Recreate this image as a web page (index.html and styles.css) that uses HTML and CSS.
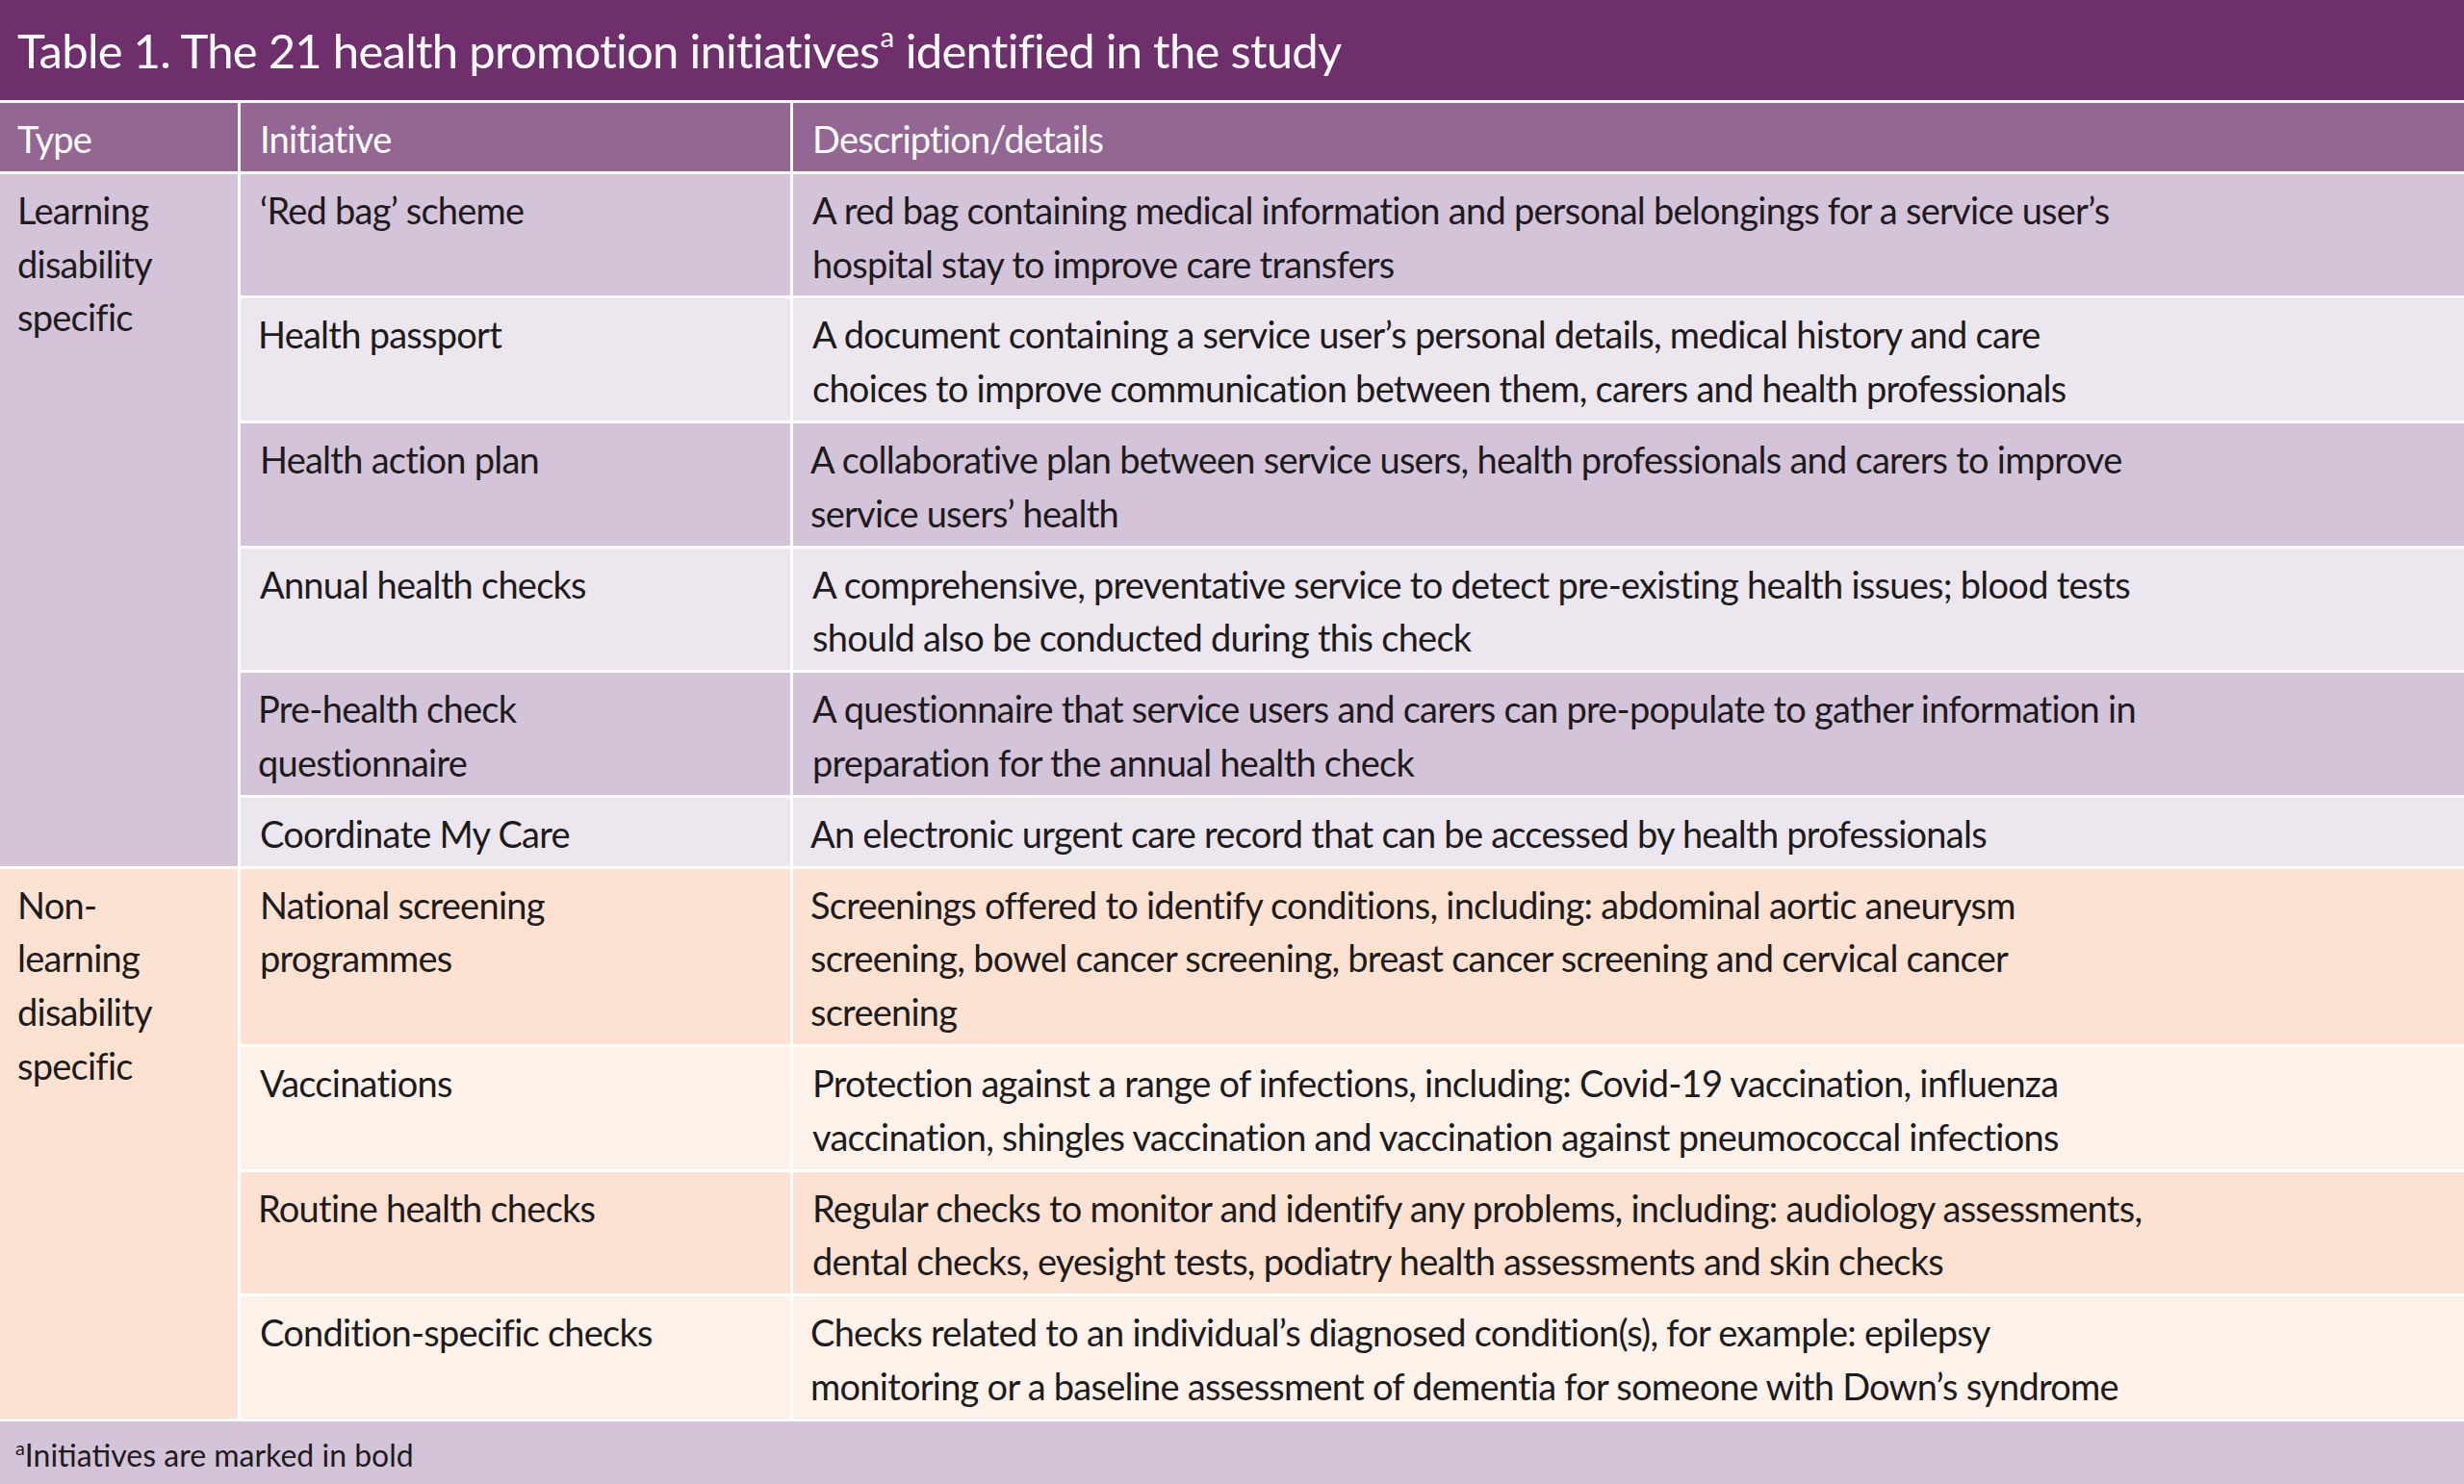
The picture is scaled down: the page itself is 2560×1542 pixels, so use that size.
FILE: index.html
```html
<!DOCTYPE html>
<html lang="en">
<head>
<meta charset="utf-8">
<title>Table 1</title>
<link rel="stylesheet" href="styles.css">
</head>
<body>
<div class="page">
  <h1 class="title">Table 1. The 21 health promotion initiatives<sup class="sup">a</sup> identified in the study</h1>
  <div class="grid">
    <div class="cell head">Type</div>
    <div class="cell head">Initiative</div>
    <div class="cell head">Description/details</div>

    <div class="cell type ld">Learning<br>disability<br>specific</div>

    <div class="cell dark">‘Red bag’ scheme</div>
    <div class="cell dark desc">A red bag containing medical information and personal belongings for a service user’s<br>hospital stay to improve care transfers</div>

    <div class="cell light">Health passport</div>
    <div class="cell light desc">A document containing a service user’s personal details, medical history and care<br>choices to improve communication between them, carers and health professionals</div>

    <div class="cell dark">Health action plan</div>
    <div class="cell dark desc">A collaborative plan between service users, health professionals and carers to improve<br>service users’ health</div>

    <div class="cell light">Annual health checks</div>
    <div class="cell light desc">A comprehensive, preventative service to detect pre-existing health issues; blood tests<br>should also be conducted during this check</div>

    <div class="cell dark">Pre-health check<br>questionnaire</div>
    <div class="cell dark desc">A questionnaire that service users and carers can pre-populate to gather information in<br>preparation for the annual health check</div>

    <div class="cell light">Coordinate My Care</div>
    <div class="cell light desc">An electronic urgent care record that can be accessed by health professionals</div>

    <div class="cell type nld">Non-<br>learning<br>disability<br>specific</div>

    <div class="cell pdark">National screening<br>programmes</div>
    <div class="cell pdark desc">Screenings offered to identify conditions, including: abdominal aortic aneurysm<br>screening, bowel cancer screening, breast cancer screening and cervical cancer<br>screening</div>

    <div class="cell plight">Vaccinations</div>
    <div class="cell plight desc">Protection against a range of infections, including: Covid-19 vaccination, influenza<br>vaccination, shingles vaccination and vaccination against pneumococcal infections</div>

    <div class="cell pdark">Routine health checks</div>
    <div class="cell pdark desc">Regular checks to monitor and identify any problems, including: audiology assessments,<br>dental checks, eyesight tests, podiatry health assessments and skin checks</div>

    <div class="cell plight">Condition-specific checks</div>
    <div class="cell plight desc">Checks related to an individual’s diagnosed condition(s), for example: epilepsy<br>monitoring or a baseline assessment of dementia for someone with Down’s syndrome</div>
  </div>
  <div class="foot"><sup class="fsup">a</sup>Initiatives are marked in bold</div>
</div>
</body>
</html>
```
FILE: styles.css
```css
html, body {
  margin: 0;
  padding: 0;
  background: #ffffff;
}

.page {
  width: 2560px;
  height: 1542px;
  overflow: hidden;
  display: flex;
  flex-direction: column;
  gap: 3px;
  background: #ffffff;
  font-family: Lato, "Open Sans", sans-serif;
  color: #1d1b1c;
}

.title {
  margin: 0;
  height: 104px;
  flex: none;
  box-sizing: border-box;
  padding: 24px 18px 0;
  background: #6f2e6c;
  color: #ffffff;
  font-weight: 400;
  font-size: 49px;
  line-height: 56px;
  letter-spacing: -0.75px;
  white-space: nowrap;
}

.sup {
  font-size: 0.6em;
  vertical-align: 0.75em;
  line-height: 0;
  letter-spacing: 0;
  margin-left: 1px;
}

.grid {
  display: grid;
  grid-template-columns: 247px 571px 1fr;
  gap: 3px;
  background: #ffffff;
}

.cell {
  padding: 10px 20px 5px;
  font-size: 38px;
  line-height: 55.8px;
  letter-spacing: -0.75px;
  white-space: nowrap;
}

.cell:nth-child(3n+1) {
  padding-left: 18px;
}

.head {
  background: #936693;
  color: #ffffff;
}

.type {
  padding-left: 18px;
}

.ld {
  grid-row: span 6;
  background: #d4c4d9;
}

.nld {
  grid-row: span 4;
  background: #fde2d1;
}

.dark {
  background: #d4c4d9;
}

.light {
  background: #ece7ef;
}

.pdark {
  background: #fde2d1;
}

.plight {
  background: #fdf2e9;
}

.desc {
  padding-left: 20px;
}

.foot {
  flex: 1;
  background: #d4c4d9;
  padding: 15px 16px 0;
  font-size: 32px;
  line-height: 40px;
  letter-spacing: 0;
  white-space: nowrap;
}

.fsup {
  font-size: 0.62em;
  vertical-align: 0.6em;
  line-height: 0;
  letter-spacing: 0;
}
```
